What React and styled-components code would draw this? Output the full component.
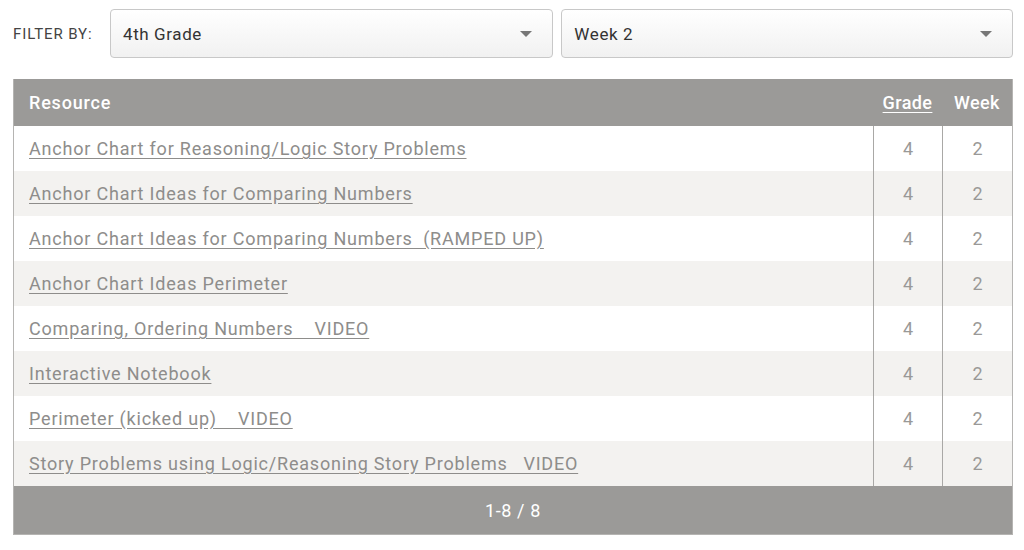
import React from "react";
import styled, { createGlobalStyle } from "styled-components";

const rows = [
    "Anchor Chart for Reasoning/Logic Story Problems",
    "Anchor Chart Ideas for Comparing Numbers",
    "Anchor Chart Ideas for Comparing Numbers  (RAMPED UP)",
    "Anchor Chart Ideas Perimeter",
    "Comparing, Ordering Numbers    VIDEO",
    "Interactive Notebook",
    "Perimeter (kicked up)    VIDEO",
    "Story Problems using Logic/Reasoning Story Problems   VIDEO",
];

export default function App() {
    return (
        <>
            <Global />
            <Page>
                <FilterBar>
                    <FilterLabel>FILTER BY:</FilterLabel>
                    <Select $grow={443}>
                        <span>4th Grade</span>
                        <Caret />
                    </Select>
                    <Select $grow={452}>
                        <span>Week 2</span>
                        <Caret />
                    </Select>
                </FilterBar>
                <Table>
                    <HeadRow>
                        <HeadCell>Resource</HeadCell>
                        <HeadCell $center><SortLink>Grade</SortLink></HeadCell>
                        <HeadCell $center>Week</HeadCell>
                    </HeadRow>
                    {rows.map((title, i) => (
                        <Row key={i} $odd={i % 2 === 1}>
                            <Cell><ResourceLink>{title}</ResourceLink></Cell>
                            <NumCell>4</NumCell>
                            <NumCell>2</NumCell>
                        </Row>
                    ))}
                    <Footer>1-8 / 8</Footer>
                </Table>
            </Page>
        </>
    )
}

const Global = createGlobalStyle`
body {
    margin: 0;
    background: #ffffff;
    font-family: Roboto, "Liberation Sans", sans-serif;
}
`
const Page = styled.div`
    padding: 9px 11px 0 13px;
`
const FilterBar = styled.div`
    display: flex;
    align-items: center;
    gap: 8px;
    margin-bottom: 21px;
`
const FilterLabel = styled.span`
    font-size: 15px;
    letter-spacing: 0.9px;
    color: #444;
    width: 89px;
`
const Select = styled.div`
    flex: ${p => p.$grow} 1 0;
    height: 49px;
    box-sizing: border-box;
    display: flex;
    align-items: center;
    justify-content: space-between;
    padding: 0 20px 0 12px;
    border: 1px solid #c8c8c8;
    border-radius: 4px;
    background: linear-gradient(#ffffff, #f1f1f1);
    font-size: 17px;
    letter-spacing: 0.6px;
    color: #333;
`
const Caret = styled.span`
    width: 0;
    height: 0;
    border-left: 6px solid transparent;
    border-right: 6px solid transparent;
    border-top: 6px solid #777;
`
const Table = styled.div`
    border: 1px solid #b5b4b2;
    border-top: none;
`
const grid = `
    display: grid;
    grid-template-columns: 1fr 69px 70px;
`
const HeadRow = styled.div`
    ${grid}
    height: 47px;
    background: #9b9a98;
    align-items: center;
`
const HeadCell = styled.div`
    color: #ffffff;
    font-size: 18px;
    font-weight: 500;
    letter-spacing: ${p => p.$center ? "0.4px" : "0.8px"};
    padding-left: ${p => p.$center ? "0" : "15px"};
    text-align: ${p => p.$center ? "center" : "left"};
`
const SortLink = styled.span`
    text-decoration: underline;
    text-underline-offset: 3px;
`
const Row = styled.div`
    ${grid}
    height: 45px;
    background: ${p => p.$odd ? "#f3f2f0" : "#ffffff"};
`
const Cell = styled.div`
    display: flex;
    align-items: center;
    padding-left: 15px;
`
const ResourceLink = styled.a`
    color: #8e8d8b;
    font-size: 18px;
    letter-spacing: 0.8px;
    text-decoration: underline;
    text-underline-offset: 3px;
    white-space: pre;
    cursor: pointer;
`
const NumCell = styled.div`
    display: flex;
    align-items: center;
    justify-content: center;
    border-left: 1px solid #a9a8a6;
    color: #9a9997;
    font-size: 18px;
`
const Footer = styled.div`
    height: 48px;
    background: #9b9a98;
    color: #ffffff;
    font-size: 18px;
    letter-spacing: 0.6px;
    display: flex;
    align-items: center;
    justify-content: center;
`
